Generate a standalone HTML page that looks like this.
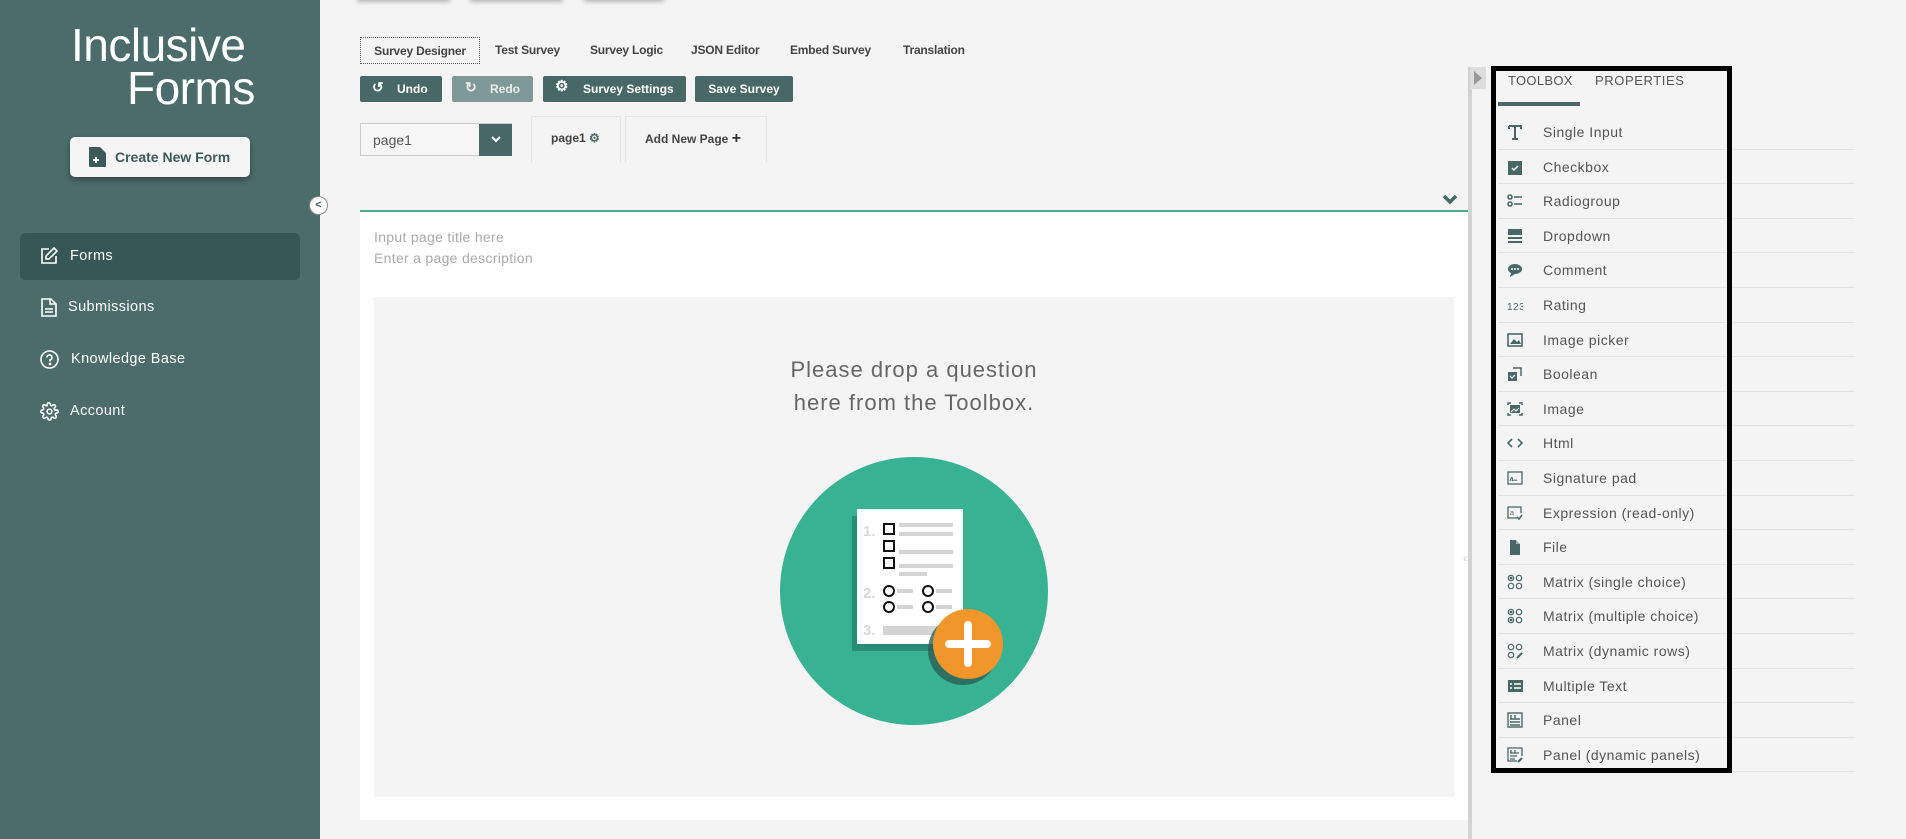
<!DOCTYPE html>
<html><head><meta charset="utf-8"><style>
*{margin:0;padding:0;box-sizing:border-box}
body{width:1906px;height:839px;overflow:hidden;background:#f4f4f4;font-family:"Liberation Sans",sans-serif;position:relative}
.abs{position:absolute}
#side{left:0;top:0;width:320px;height:839px;background:#4c6b6b}
.logo{color:#fff;font-family:"Liberation Sans",sans-serif;font-size:46px;line-height:43px;letter-spacing:-0.5px}
.create{left:70px;top:137px;width:180px;height:40px;background:#f5f5f5;border-radius:5px;box-shadow:0 3px 6px rgba(0,0,0,.35);color:#3d5a5a;font-weight:bold;font-size:14px;line-height:40px;padding-left:45px}
.nav{left:40px;color:#fff;font-size:14.5px;letter-spacing:.4px}
.nav svg{position:absolute;left:0;top:0}
.nav span{position:absolute;left:30px;top:1px;white-space:nowrap}
.tab{top:37px;height:27px;font-size:12px;font-weight:bold;color:#444;line-height:27px;letter-spacing:-.2px}
.btn{top:76px;height:26px;background:#486868;color:#fff;font-size:12px;font-weight:bold;line-height:26px;border-radius:2px}
.row{position:absolute;left:1498px;width:357px;height:34.6px;border-bottom:1px solid #e2e2e2;font-size:14px;color:#555;letter-spacing:.5px}
.row span{position:absolute;left:45px;top:9px;white-space:nowrap}
.row svg{position:absolute;left:9px;top:9px}
</style></head><body>
<div id="side" class="abs">
 <div class="abs logo" style="left:71px;top:24px">Inclusive</div>
 <div class="abs logo" style="left:127px;top:67px">Forms</div>
 <div class="abs create"><svg class="abs" style="left:19px;top:10px" width="17" height="20" viewBox="0 0 17 20"><path d="M1 0h10l6 6v13a1 1 0 0 1-1 1H1a1 1 0 0 1-1-1V1a1 1 0 0 1 1-1z" fill="#3d5a5a"/><path d="M4 13h6M7 10v6" stroke="#fff" stroke-width="2"/></svg>Create New Form</div>
 <div class="abs" style="left:309px;top:196px;width:19px;height:19px;border-radius:50%;background:#fff;border:1px solid #888;font-size:11px;font-weight:bold;color:#456;text-align:center;line-height:17px">&lt;</div>
 <div class="abs" style="left:20px;top:233px;width:280px;height:47px;background:#375656;border-radius:5px"></div>
 <div class="abs nav" style="top:247px"><svg width="18" height="18" viewBox="0 0 18 18" fill="none" stroke="#fff" stroke-width="1.6"><path d="M9 2H2v14h14V9"/><path d="M14 1l3 3-8 8H6V9z"/></svg><span>Forms</span></div>
 <div class="abs nav" style="top:298px"><svg width="18" height="19" viewBox="0 0 18 19" fill="none" stroke="#fff" stroke-width="1.6"><path d="M2 1h9l5 5v12H2z"/><path d="M10 1v5h6M5 11h8M5 14h8"/></svg><span style="left:28px">Submissions</span></div>
 <div class="abs nav" style="top:350px"><svg width="19" height="19" viewBox="0 0 19 19" fill="none" stroke="#fff" stroke-width="1.6"><circle cx="9.5" cy="9.5" r="8.5"/><path d="M7 7.5a2.5 2.5 0 1 1 3 2.4V11.5"/><circle cx="10" cy="14" r=".6" fill="#fff"/></svg><span style="left:31px">Knowledge Base</span></div>
 <div class="abs nav" style="top:402px"><svg width="19" height="19" viewBox="0 0 24 24" fill="none" stroke="#fff" stroke-width="2"><circle cx="12" cy="12" r="3"/><path d="M19.4 15a1.7 1.7 0 0 0 .3 1.8l.1.1a2 2 0 1 1-2.8 2.8l-.1-.1a1.7 1.7 0 0 0-2.9 1.2V21a2 2 0 1 1-4 0v-.1A1.7 1.7 0 0 0 9 19.4a1.7 1.7 0 0 0-1.8.3l-.1.1a2 2 0 1 1-2.8-2.8l.1-.1A1.7 1.7 0 0 0 3.2 14H3a2 2 0 1 1 0-4h.1A1.7 1.7 0 0 0 4.6 9a1.7 1.7 0 0 0-.3-1.8l-.1-.1a2 2 0 1 1 2.8-2.8l.1.1A1.7 1.7 0 0 0 9 4.6V3a2 2 0 1 1 4 0v.1a1.7 1.7 0 0 0 2.9 1.2l.1-.1a2 2 0 1 1 2.8 2.8l-.1.1A1.7 1.7 0 0 0 20.8 10H21a2 2 0 1 1 0 4h-.1a1.7 1.7 0 0 0-1.5 1z"/></svg><span style="left:30px">Account</span></div>
</div>
<div class="abs" style="left:357px;top:-10px;width:93px;height:10px;box-shadow:0 2px 4px rgba(0,0,0,.25)"></div>
<div class="abs" style="left:470px;top:-10px;width:93px;height:10px;box-shadow:0 2px 4px rgba(0,0,0,.25)"></div>
<div class="abs" style="left:584px;top:-10px;width:80px;height:10px;box-shadow:0 2px 4px rgba(0,0,0,.25)"></div>
<div class="abs tab" style="left:360px;width:120px;border:1px dotted #555;text-align:center">Survey Designer</div>
<div class="abs tab" style="left:495px">Test Survey</div>
<div class="abs tab" style="left:590px">Survey Logic</div>
<div class="abs tab" style="left:691px">JSON Editor</div>
<div class="abs tab" style="left:790px">Embed Survey</div>
<div class="abs tab" style="left:903px">Translation</div>
<div class="abs btn" style="left:360px;width:82px;padding-left:37px">Undo<span class="abs" style="left:12px;top:-2px;font-size:14px">&#x21BA;</span></div>
<div class="abs btn" style="left:452px;width:81px;padding-left:38px;background:#7f9999;color:#eee">Redo<span class="abs" style="left:13px;top:-2px;font-size:14px">&#x21BB;</span></div>
<div class="abs btn" style="left:543px;width:143px;padding-left:40px">Survey Settings<span class="abs" style="left:12px;top:-2px;font-size:15px">&#x2699;</span></div>
<div class="abs btn" style="left:695px;width:98px;text-align:center">Save Survey</div>
<div class="abs" style="left:360px;top:123px;width:152px;height:33px;background:#f6f6f6;border:1px solid #ccc;font-size:14px;color:#555;line-height:33px;padding-left:12px">page1</div>
<div class="abs" style="left:479px;top:124px;width:33px;height:32px;background:#486868;color:#fff;text-align:center;line-height:32px;font-size:11px"><svg width="10" height="8" viewBox="0 0 10 8"><path d="M1 2l4 4 4-4" stroke="#fff" stroke-width="2" fill="none"/></svg></div>
<div class="abs" style="left:531px;top:116px;width:90px;height:47px;border:1px solid #e6e6e6;border-bottom:none;font-size:12px;font-weight:bold;color:#444;padding:14px 0 0 19px">page1 <span style="color:#486868">&#x2699;</span></div>
<div class="abs" style="left:625px;top:116px;width:142px;height:47px;border:1px solid #e6e6e6;border-bottom:none;font-size:12px;font-weight:bold;color:#444;padding:13px 0 0 19px">Add New Page <span style="font-size:16px;color:#333">+</span></div>
<svg class="abs" style="left:1442px;top:194px" width="16" height="12" viewBox="0 0 16 12"><path d="M2 2l6 6 6-6" stroke="#486868" stroke-width="3.5" fill="none"/></svg>
<div class="abs" style="left:360px;top:210px;width:1108px;height:2px;background:#47a990"></div>
<div class="abs" style="left:360px;top:212px;width:1108px;height:608px;background:#fff"></div>
<div class="abs" style="left:374px;top:229px;font-size:14px;color:#aaa;letter-spacing:.3px">Input page title here</div>
<div class="abs" style="left:374px;top:250px;font-size:14px;color:#aaa;letter-spacing:.3px">Enter a page description</div>
<div class="abs" style="left:374px;top:297px;width:1080px;height:500px;background:#f4f4f4"></div>
<div class="abs" style="left:614px;top:353px;width:600px;text-align:center;font-size:22px;line-height:33px;color:#666;letter-spacing:1px">Please drop a question<br>here from the Toolbox.</div>
<svg class="abs" style="left:779px;top:456px" width="270" height="270" viewBox="0 0 270 270">
<circle cx="135" cy="135" r="134" fill="#37b293"/>
<rect x="73" y="60" width="106" height="135" fill="#2a8c74"/>
<rect x="78" y="53" width="106" height="135" fill="#fff"/>
<g fill="#d4d4d4"><rect x="120" y="67" width="54" height="4"/><rect x="120" y="76" width="54" height="4"/><rect x="120" y="94" width="54" height="4"/><rect x="120" y="108" width="54" height="4"/><rect x="120" y="116" width="28" height="4"/><rect x="118" y="133" width="16" height="4"/><rect x="157" y="133" width="16" height="4"/><rect x="118" y="149" width="16" height="4"/><rect x="157" y="149" width="16" height="4"/><rect x="104" y="170" width="60" height="9"/></g>
<g font-family="Liberation Sans" font-weight="bold" font-size="15" fill="#d8d8d8"><text x="84" y="80">1.</text><text x="84" y="142">2.</text><text x="84" y="179">3.</text></g>
<g fill="none" stroke="#111" stroke-width="2"><rect x="105" y="68" width="10" height="10"/><rect x="105" y="85" width="10" height="10"/><rect x="105" y="102" width="10" height="10"/><circle cx="110" cy="135" r="5"/><circle cx="149" cy="135" r="5"/><circle cx="110" cy="151" r="5"/><circle cx="149" cy="151" r="5"/></g>
<circle cx="184" cy="194" r="35" fill="#2b5f55" opacity=".8"/>
<circle cx="189" cy="188" r="35" fill="#f0962a"/>
<path d="M189 169v38M170 188h38" stroke="#fff" stroke-width="8" stroke-linecap="round"/>
</svg>
<div class="abs" style="left:1468px;top:67px;width:4px;height:772px;background:#d3d3d3"></div>
<div class="abs" style="left:1470px;top:67px;width:16px;height:22px;background:#ddd"></div>
<svg class="abs" style="left:1471px;top:70px" width="14" height="16" viewBox="0 0 14 16"><path d="M3 1l8 7-8 7z" fill="#999"/></svg>
<div class="abs" style="left:1463px;top:553px;font-size:11px;color:#ccc">‹›</div>
<div class="row" style="top:115px"><svg width="16" height="16" viewBox="0 0 16 16"><path d="M2 2h12v3M2 2v3M8 2v13M5 15h6" stroke="#4a6868" stroke-width="2" fill="none"/></svg><span>Single Input</span></div>
<div class="row" style="top:149.6px"><svg width="16" height="16"><rect x="1" y="2" width="14" height="14" fill="#486868"/><path d="M5 9l2 2 4-4" stroke="#fff" stroke-width="1.5" fill="none"/></svg><span>Checkbox</span></div>
<div class="row" style="top:184.2px"><svg width="16" height="16" fill="none" stroke="#486868" stroke-width="1.6"><circle cx="3" cy="4" r="2"/><circle cx="3" cy="11" r="2"/><path d="M7 4h8M7 11h8"/></svg><span>Radiogroup</span></div>
<div class="row" style="top:218.8px"><svg width="16" height="16"><rect x="1" y="1" width="14" height="6" fill="#486868"/><path d="M1 10h14M1 14h14" stroke="#486868" stroke-width="2"/></svg><span>Dropdown</span></div>
<div class="row" style="top:253.4px"><svg width="16" height="16"><ellipse cx="8" cy="7" rx="7" ry="5" fill="#486868"/><path d="M4 11l-1 4 5-3z" fill="#486868"/><circle cx="5" cy="7" r="1" fill="#fff"/><circle cx="8" cy="7" r="1" fill="#fff"/><circle cx="11" cy="7" r="1" fill="#fff"/></svg><span>Comment</span></div>
<div class="row" style="top:288px"><svg width="16" height="16"><text x="0" y="13" font-size="10" font-family="Liberation Sans" fill="#486868">123</text></svg><span>Rating</span></div>
<div class="row" style="top:322.6px"><svg width="16" height="16"><rect x="1" y="2" width="14" height="12" fill="none" stroke="#486868" stroke-width="1.6"/><path d="M3 12l4-5 3 3 2-2 2 4z" fill="#486868"/></svg><span>Image picker</span></div>
<div class="row" style="top:357.2px"><svg width="16" height="16"><path d="M6 2h8v8" stroke="#486868" stroke-width="1.5" fill="none"/><rect x="1" y="6" width="9" height="9" fill="#486868"/><path d="M3 10l2 2 3-3" stroke="#fff" stroke-width="1.3" fill="none"/></svg><span>Boolean</span></div>
<div class="row" style="top:391.8px"><svg width="16" height="16"><path d="M1 4V2h3M12 2h3v2M15 12v2h-3M4 14H1v-2" stroke="#486868" stroke-width="1.5" fill="none"/><path d="M3 4h10v8H3z" fill="#486868"/><path d="M4 11l3-3 2 2 3-3" stroke="#fff" fill="none"/></svg><span>Image</span></div>
<div class="row" style="top:426.4px"><svg width="16" height="16"><path d="M5 4L1 8l4 4M11 4l4 4-4 4" stroke="#486868" stroke-width="1.6" fill="none"/></svg><span>Html</span></div>
<div class="row" style="top:461px"><svg width="16" height="16"><rect x="1" y="2" width="14" height="12" fill="none" stroke="#486868" stroke-width="1.3"/><path d="M3 11c2-6 3-3 2 0 2-2 3 0 5-1" stroke="#486868" fill="none"/></svg><span>Signature pad</span></div>
<div class="row" style="top:495.6px"><svg width="16" height="16"><path d="M10 13H1V2h13v6" stroke="#486868" stroke-width="1.3" fill="none"/><text x="3" y="10" font-size="7" fill="#486868" font-family="Liberation Sans">a</text><path d="M10 12l2 2 3-4" stroke="#486868" stroke-width="1.5" fill="none"/></svg><span>Expression (read-only)</span></div>
<div class="row" style="top:530.2px"><svg width="16" height="16"><path d="M3 1h6l4 4v11H3z" fill="#486868"/><path d="M9 1v4h4" fill="#fff" opacity=".5"/></svg><span>File</span></div>
<div class="row" style="top:564.8px"><svg width="16" height="16" fill="none" stroke="#486868" stroke-width="1.2"><circle cx="4" cy="4" r="2.7"/><circle cx="12" cy="4" r="2.7"/><circle cx="4" cy="12" r="2.7"/><circle cx="12" cy="12" r="2.7"/><circle cx="4" cy="4" r=".8" fill="#486868"/></svg><span>Matrix (single choice)</span></div>
<div class="row" style="top:599.4px"><svg width="16" height="16" fill="none" stroke="#486868" stroke-width="1.2"><circle cx="4" cy="4" r="2.7"/><circle cx="12" cy="4" r="2.7"/><circle cx="4" cy="12" r="2.7"/><circle cx="12" cy="12" r="2.7"/><circle cx="4" cy="4" r=".8" fill="#486868"/><circle cx="4" cy="12" r=".8" fill="#486868"/></svg><span>Matrix (multiple choice)</span></div>
<div class="row" style="top:634px"><svg width="16" height="16" fill="none" stroke="#486868" stroke-width="1.2"><circle cx="4" cy="4" r="2.7"/><circle cx="12" cy="4" r="2.7"/><circle cx="4" cy="12" r="2.7"/><path d="M10 15l5-5" stroke-width="2"/></svg><span>Matrix (dynamic rows)</span></div>
<div class="row" style="top:668.6px"><svg width="16" height="16"><rect x="1" y="2" width="15" height="12" fill="#486868"/><path d="M3 6h2M7 6h7M3 10h2M7 10h7" stroke="#fff" stroke-width="1.5"/></svg><span>Multiple Text</span></div>
<div class="row" style="top:703.2px"><svg width="16" height="16"><rect x="1" y="1" width="14" height="14" fill="none" stroke="#486868" stroke-width="1.4"/><path d="M4 3v4M8 3v4M3 7h10M3 10h10M3 13h10" stroke="#486868" stroke-width="1.4"/></svg><span>Panel</span></div>
<div class="row" style="top:737.8px"><svg width="16" height="16"><path d="M10 14H1V1h14v8" stroke="#486868" stroke-width="1.3" fill="none"/><path d="M4 3v3M8 3v3M3 6h9M3 9h7M3 12h5" stroke="#486868" stroke-width="1.3"/><path d="M11 15l4-4" stroke="#486868" stroke-width="2"/></svg><span>Panel (dynamic panels)</span></div>
<div class="abs" style="left:1491px;top:66px;width:241px;height:707px;border:5px solid #000"></div>
<div class="abs" style="left:1508px;top:73px;font-size:13px;color:#555;letter-spacing:.3px">TOOLBOX</div>
<div class="abs" style="left:1595px;top:73px;font-size:13px;color:#555;letter-spacing:.6px">PROPERTIES</div>
<div class="abs" style="left:1498px;top:102px;width:82px;height:4px;background:#4a6868"></div>
</body></html>
